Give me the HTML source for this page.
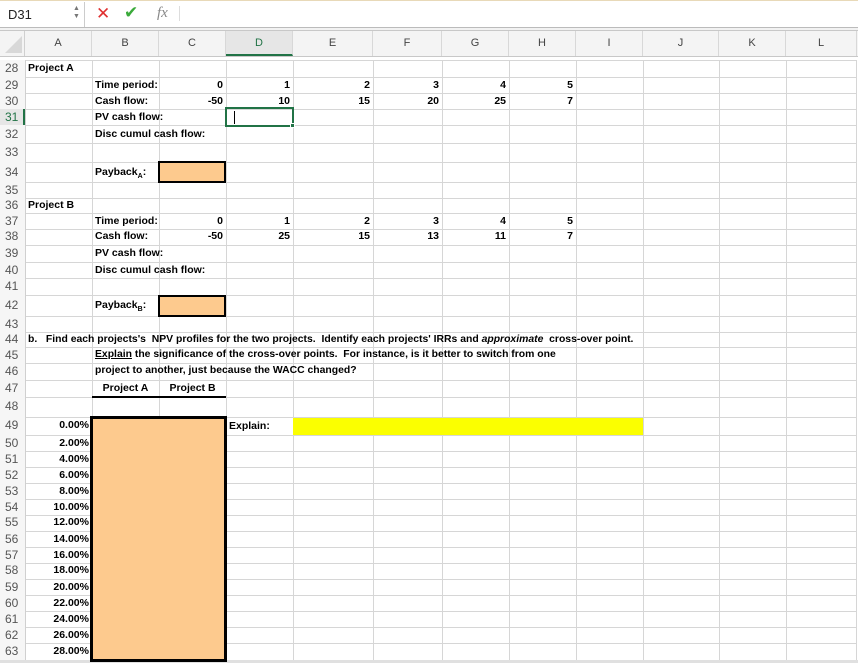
<!DOCTYPE html>
<html><head><meta charset="utf-8"><style>
*{margin:0;padding:0;box-sizing:border-box}
body{width:858px;height:663px;overflow:hidden;background:#fff;position:relative;font-family:"Liberation Sans",Arial,sans-serif}
.a{position:absolute}
.c{position:absolute;font-size:10.5px;font-weight:bold;color:#000;white-space:nowrap;padding:0 3px}
.r{text-align:right}
.rn{position:absolute;left:0;width:25px;font-size:12px;color:#555;padding-left:5px;background:#f6f6f6}
.hl{position:absolute;left:0;width:857px;height:1px;background:#d6d6d6}
.h{position:absolute;top:31px;height:25px;line-height:25px;font-size:11px;color:#444;text-align:center;border-right:1px solid #d8d8d8}
</style></head><body>
<div class="a" style="left:0;top:0;width:858px;height:1px;background:#e8d9b8"></div>
<div class="a" style="left:0;top:1px;width:858px;height:27px;background:#fff;border-bottom:1px solid #bbb"></div>
<div class="a" style="left:0;top:28px;width:858px;height:3px;background:#f2f2f2;border-bottom:1px solid #c8c8c8"></div>
<div class="a" style="left:8px;top:7px;font-size:13px;color:#222">D31</div>
<div class="a" style="left:73px;top:5px;font-size:7px;color:#777;line-height:8px">▲<br>▼</div>
<div class="a" style="left:84px;top:2px;width:1px;height:25px;background:#ccc"></div>
<div class="a" style="left:96px;top:4px;font-size:17px;color:#e03030">✕</div>
<div class="a" style="left:124px;top:3px;font-size:17px;color:#3aaa3a">✔</div>
<div class="a" style="left:157px;top:5px;font-size:15px;color:#888;font-style:italic;font-family:'Liberation Serif',serif">fx</div>
<div class="a" style="left:179px;top:6px;width:1px;height:15px;background:#ddd"></div>
<div class="a" style="left:0;top:31px;width:858px;height:26px;background:#f4f4f4;border-bottom:1px solid #c8c8c8"></div>
<div class="a" style="left:0;top:31px;width:25px;height:25px;border-right:1px solid #d0d0d0"></div>
<div class="a" style="left:5px;top:36px;width:0;height:0;border-left:17px solid transparent;border-bottom:17px solid #d8d8d8"></div>
<div class="h" style="left:25px;width:67px">A</div>
<div class="h" style="left:92px;width:67px">B</div>
<div class="h" style="left:159px;width:67px">C</div>
<div class="h" style="left:226px;width:67px;color:#217346;border-bottom:2px solid #217346;background:#e6e6e6">D</div>
<div class="h" style="left:293px;width:80px">E</div>
<div class="h" style="left:373px;width:69px">F</div>
<div class="h" style="left:442px;width:67px">G</div>
<div class="h" style="left:509px;width:67px">H</div>
<div class="h" style="left:576px;width:67px">I</div>
<div class="h" style="left:643px;width:76px">J</div>
<div class="h" style="left:719px;width:67px">K</div>
<div class="h" style="left:786px;width:71px">L</div>

<!-- row number column bg -->
<div class="a" style="left:0;top:60px;width:25px;height:601px;background:#f6f6f6"></div>
<!-- horizontal lines -->
<div class="hl" style="top:60px"></div><div class="hl" style="top:76.5px"></div><div class="hl" style="top:92.5px"></div><div class="hl" style="top:108.5px"></div><div class="hl" style="top:125px"></div><div class="hl" style="top:143px"></div><div class="hl" style="top:161.7px"></div><div class="hl" style="top:182.3px"></div><div class="hl" style="top:198.3px"></div><div class="hl" style="top:213.3px"></div><div class="hl" style="top:229.3px"></div><div class="hl" style="top:245px"></div><div class="hl" style="top:261.7px"></div><div class="hl" style="top:278px"></div><div class="hl" style="top:295px"></div><div class="hl" style="top:316px"></div><div class="hl" style="top:332.3px"></div><div class="hl" style="top:347.3px"></div><div class="hl" style="top:363.3px"></div><div class="hl" style="top:380px"></div><div class="hl" style="top:397.3px"></div><div class="hl" style="top:416.7px"></div><div class="hl" style="top:434.5px"></div><div class="hl" style="top:450.7px"></div><div class="hl" style="top:466.7px"></div><div class="hl" style="top:482.7px"></div><div class="hl" style="top:499px"></div><div class="hl" style="top:515.3px"></div><div class="hl" style="top:531px"></div><div class="hl" style="top:547px"></div><div class="hl" style="top:563px"></div><div class="hl" style="top:578.8px"></div><div class="hl" style="top:595px"></div><div class="hl" style="top:611px"></div><div class="hl" style="top:627px"></div><div class="hl" style="top:643px"></div>
<div class="a" style="left:0;top:60px;width:858px;height:601px;background:
linear-gradient(#d0d0d0,#d0d0d0) 25px 0/1px 100% no-repeat,
linear-gradient(#d6d6d6,#d6d6d6) 92px 0/1px 100% no-repeat,
linear-gradient(#d6d6d6,#d6d6d6) 159px 0/1px 100% no-repeat,
linear-gradient(#d6d6d6,#d6d6d6) 226px 0/1px 100% no-repeat,
linear-gradient(#d6d6d6,#d6d6d6) 293px 0/1px 100% no-repeat,
linear-gradient(#d6d6d6,#d6d6d6) 373px 0/1px 100% no-repeat,
linear-gradient(#d6d6d6,#d6d6d6) 442px 0/1px 100% no-repeat,
linear-gradient(#d6d6d6,#d6d6d6) 509px 0/1px 100% no-repeat,
linear-gradient(#d6d6d6,#d6d6d6) 576px 0/1px 100% no-repeat,
linear-gradient(#d6d6d6,#d6d6d6) 643px 0/1px 100% no-repeat,
linear-gradient(#d6d6d6,#d6d6d6) 719px 0/1px 100% no-repeat,
linear-gradient(#d6d6d6,#d6d6d6) 786px 0/1px 100% no-repeat,
linear-gradient(#d6d6d6,#d6d6d6) 856px 0/1px 100% no-repeat"></div>
<div class="a" style="left:0;top:660px;width:858px;height:3px;background:#e0e0e0"></div>

<!-- row numbers -->
<div class="rn" style="top:60px;height:16.5px;line-height:16.5px">28</div>
<div class="rn" style="top:76.5px;height:16px;line-height:16px">29</div>
<div class="rn" style="top:92.5px;height:16px;line-height:16px">30</div>
<div class="rn" style="top:108.5px;height:16.5px;line-height:16.5px;color:#217346;background:#e6e6e6;border-right:2px solid #217346">31</div>
<div class="rn" style="top:125px;height:18px;line-height:18px">32</div>
<div class="rn" style="top:143px;height:18.7px;line-height:18.7px">33</div>
<div class="rn" style="top:161.7px;height:20.6px;line-height:20.6px">34</div>
<div class="rn" style="top:182.3px;height:16px;line-height:16px">35</div>
<div class="rn" style="top:198.3px;height:15px;line-height:15px">36</div>
<div class="rn" style="top:213.3px;height:16px;line-height:16px">37</div>
<div class="rn" style="top:229.3px;height:15.7px;line-height:15.7px">38</div>
<div class="rn" style="top:245px;height:16.7px;line-height:16.7px">39</div>
<div class="rn" style="top:261.7px;height:16.3px;line-height:16.3px">40</div>
<div class="rn" style="top:278px;height:17px;line-height:17px">41</div>
<div class="rn" style="top:295px;height:21px;line-height:21px">42</div>
<div class="rn" style="top:316px;height:16.3px;line-height:16.3px">43</div>
<div class="rn" style="top:332.3px;height:15px;line-height:15px">44</div>
<div class="rn" style="top:347.3px;height:16px;line-height:16px">45</div>
<div class="rn" style="top:363.3px;height:16.7px;line-height:16.7px">46</div>
<div class="rn" style="top:380px;height:17.3px;line-height:17.3px">47</div>
<div class="rn" style="top:397.3px;height:19.4px;line-height:19.4px">48</div>
<div class="rn" style="top:416.7px;height:17.8px;line-height:17.8px">49</div>
<div class="rn" style="top:434.5px;height:16.2px;line-height:16.2px">50</div>
<div class="rn" style="top:450.7px;height:16px;line-height:16px">51</div>
<div class="rn" style="top:466.7px;height:16px;line-height:16px">52</div>
<div class="rn" style="top:482.7px;height:16.3px;line-height:16.3px">53</div>
<div class="rn" style="top:499px;height:16.3px;line-height:16.3px">54</div>
<div class="rn" style="top:515.3px;height:15.7px;line-height:15.7px">55</div>
<div class="rn" style="top:531px;height:16px;line-height:16px">56</div>
<div class="rn" style="top:547px;height:16px;line-height:16px">57</div>
<div class="rn" style="top:563px;height:15.8px;line-height:15.8px">58</div>
<div class="rn" style="top:578.8px;height:16.2px;line-height:16.2px">59</div>
<div class="rn" style="top:595px;height:16px;line-height:16px">60</div>
<div class="rn" style="top:611px;height:16px;line-height:16px">61</div>
<div class="rn" style="top:627px;height:16px;line-height:16px">62</div>
<div class="rn" style="top:643px;height:17px;line-height:17px">63</div>

<!-- fills -->
<div class="a" style="left:158px;top:160.7px;width:68px;height:22px;background:#fdca8e;border:2px solid #000"></div>
<div class="a" style="left:158px;top:294.5px;width:68px;height:22px;background:#fdca8e;border:2px solid #000"></div>
<div class="a" style="left:90px;top:415.7px;width:137px;height:246px;background:#fdca8e;border:3px solid #000"></div>
<div class="a" style="left:293px;top:418px;width:350px;height:17px;background:#fbff00"></div>
<div class="a" style="left:92px;top:396.3px;width:134px;height:2px;background:#000"></div>
<div class="a" style="left:225px;top:107px;width:69px;height:20px;border:2px solid #217346"></div>
<div class="a" style="left:290px;top:123px;width:5px;height:5px;background:#217346;border:1px solid #fff"></div>
<div class="a" style="left:234px;top:111px;width:1px;height:13px;background:#000"></div>

<!-- text -->
<div class="c" style="left:25px;top:60px;line-height:16.5px">Project A</div>
<div class="c" style="left:92px;top:76.5px;line-height:16px">Time period:</div>
<div class="c r" style="left:159px;top:76.5px;width:67px;line-height:16px">0</div>
<div class="c r" style="left:226px;top:76.5px;width:67px;line-height:16px">1</div>
<div class="c r" style="left:293px;top:76.5px;width:80px;line-height:16px">2</div>
<div class="c r" style="left:373px;top:76.5px;width:69px;line-height:16px">3</div>
<div class="c r" style="left:442px;top:76.5px;width:67px;line-height:16px">4</div>
<div class="c r" style="left:509px;top:76.5px;width:67px;line-height:16px">5</div>
<div class="c" style="left:92px;top:92.5px;line-height:16px">Cash flow:</div>
<div class="c r" style="left:159px;top:92.5px;width:67px;line-height:16px">-50</div>
<div class="c r" style="left:226px;top:92.5px;width:67px;line-height:16px">10</div>
<div class="c r" style="left:293px;top:92.5px;width:80px;line-height:16px">15</div>
<div class="c r" style="left:373px;top:92.5px;width:69px;line-height:16px">20</div>
<div class="c r" style="left:442px;top:92.5px;width:67px;line-height:16px">25</div>
<div class="c r" style="left:509px;top:92.5px;width:67px;line-height:16px">7</div>
<div class="c" style="left:92px;top:108.5px;line-height:16.5px">PV cash flow:</div>
<div class="c" style="left:92px;top:125px;line-height:18px">Disc cumul cash flow:</div>
<div class="c" style="left:92px;top:161.7px;line-height:20.6px">Payback<sub style="font-size:7px">A</sub>:</div>
<div class="c" style="left:25px;top:198.3px;line-height:15px">Project B</div>
<div class="c" style="left:92px;top:213.3px;line-height:16px">Time period:</div>
<div class="c r" style="left:159px;top:213.3px;width:67px;line-height:16px">0</div>
<div class="c r" style="left:226px;top:213.3px;width:67px;line-height:16px">1</div>
<div class="c r" style="left:293px;top:213.3px;width:80px;line-height:16px">2</div>
<div class="c r" style="left:373px;top:213.3px;width:69px;line-height:16px">3</div>
<div class="c r" style="left:442px;top:213.3px;width:67px;line-height:16px">4</div>
<div class="c r" style="left:509px;top:213.3px;width:67px;line-height:16px">5</div>
<div class="c" style="left:92px;top:229.3px;line-height:15.7px">Cash flow:</div>
<div class="c r" style="left:159px;top:229.3px;width:67px;line-height:15.7px">-50</div>
<div class="c r" style="left:226px;top:229.3px;width:67px;line-height:15.7px">25</div>
<div class="c r" style="left:293px;top:229.3px;width:80px;line-height:15.7px">15</div>
<div class="c r" style="left:373px;top:229.3px;width:69px;line-height:15.7px">13</div>
<div class="c r" style="left:442px;top:229.3px;width:67px;line-height:15.7px">11</div>
<div class="c r" style="left:509px;top:229.3px;width:67px;line-height:15.7px">7</div>
<div class="c" style="left:92px;top:245px;line-height:16.7px">PV cash flow:</div>
<div class="c" style="left:92px;top:261.7px;line-height:16.3px">Disc cumul cash flow:</div>
<div class="c" style="left:92px;top:295px;line-height:21px">Payback<sub style="font-size:7px">B</sub>:</div>
<div class="c" style="left:25px;top:332.3px;line-height:15px;font-size:10.4px">b.&nbsp;&nbsp; Find each projects's&nbsp; NPV profiles for the two projects.&nbsp; Identify each projects' IRRs and <i>approximate</i>&nbsp; cross-over point.</div>
<div class="c" style="left:92px;top:347.3px;line-height:16px;font-size:10.4px"><u>Explain</u> the significance of the cross-over points.&nbsp; For instance, is it better to switch from one</div>
<div class="c" style="left:92px;top:363.3px;line-height:16.7px;font-size:10.4px">project to another, just because the WACC changed?</div>
<div class="c" style="left:92px;top:380px;width:67px;text-align:center;line-height:17px">Project A</div>
<div class="c" style="left:159px;top:380px;width:67px;text-align:center;line-height:17px">Project B</div>
<div class="c" style="left:226px;top:417px;line-height:18px">Explain:</div>
<div class="c r" style="left:25px;top:416.7px;width:67px;line-height:17.8px">0.00%</div>
<div class="c r" style="left:25px;top:434.5px;width:67px;line-height:16.2px">2.00%</div>
<div class="c r" style="left:25px;top:450.7px;width:67px;line-height:16px">4.00%</div>
<div class="c r" style="left:25px;top:466.7px;width:67px;line-height:16px">6.00%</div>
<div class="c r" style="left:25px;top:482.7px;width:67px;line-height:16.3px">8.00%</div>
<div class="c r" style="left:25px;top:499px;width:67px;line-height:16.3px">10.00%</div>
<div class="c r" style="left:25px;top:515.3px;width:67px;line-height:15.7px">12.00%</div>
<div class="c r" style="left:25px;top:531px;width:67px;line-height:16px">14.00%</div>
<div class="c r" style="left:25px;top:547px;width:67px;line-height:16px">16.00%</div>
<div class="c r" style="left:25px;top:563px;width:67px;line-height:15.8px">18.00%</div>
<div class="c r" style="left:25px;top:578.8px;width:67px;line-height:16.2px">20.00%</div>
<div class="c r" style="left:25px;top:595px;width:67px;line-height:16px">22.00%</div>
<div class="c r" style="left:25px;top:611px;width:67px;line-height:16px">24.00%</div>
<div class="c r" style="left:25px;top:627px;width:67px;line-height:16px">26.00%</div>
<div class="c r" style="left:25px;top:643px;width:67px;line-height:17px">28.00%</div>
</body></html>
